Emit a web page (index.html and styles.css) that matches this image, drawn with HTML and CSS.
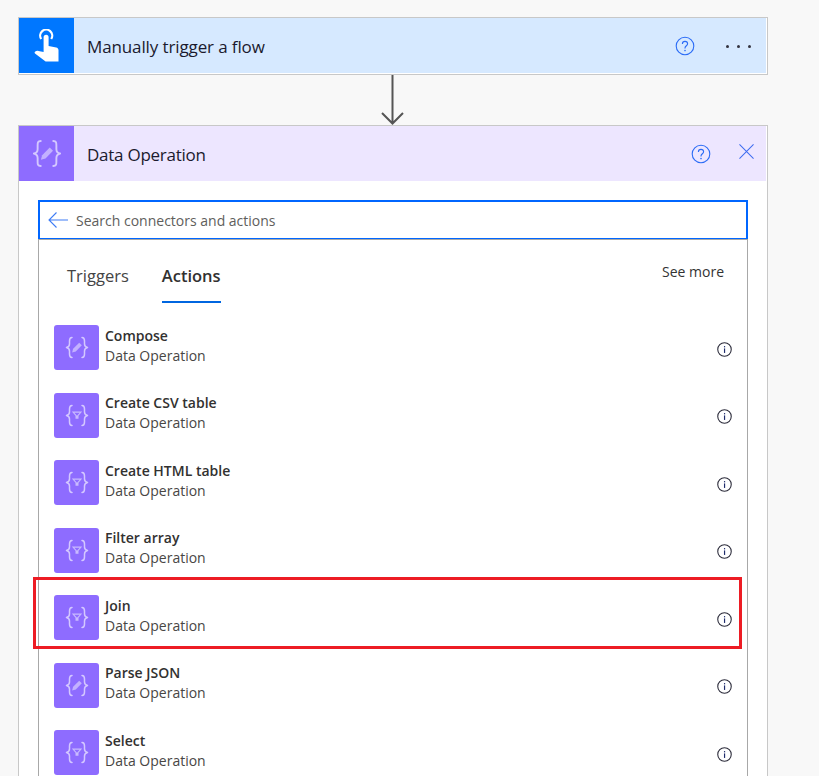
FILE: index.html
```html
<!DOCTYPE html>
<html lang="en">
<head>
<meta charset="utf-8">
<title>Flow</title>
<link rel="stylesheet" href="styles.css">
</head>
<body>
<svg class="defs" width="0" height="0" aria-hidden="true">
  <defs>
    <g id="braces" fill="none" stroke="currentColor" stroke-width="1.500" stroke-linecap="round" stroke-linejoin="round">
      <path d="M7 1.500C4.500 1.500 4.500 3 4.500 5V8C4.500 10 3.500 11 1.500 11.500C3.500 12 4.500 13 4.500 15V18C4.500 20 4.500 21.500 7 21.500"/>
      <path d="M17 1.500C19.500 1.500 19.500 3 19.500 5V8C19.500 10 20.500 11 22.500 11.500C20.500 12 19.500 13 19.500 15V18C19.500 20 19.500 21.500 17 21.500"/>
    </g>
    <symbol id="ic-pen" viewBox="0 0 24 23">
      <use href="#braces"/>
      <path d="M14.200 6.700l2.600 2.500-6 6.200-3.700 1.100 1-3.700z" fill="currentColor" opacity=".75"/>
    </symbol>
    <symbol id="ic-filter" viewBox="0 0 24 23">
      <use href="#braces"/>
      <path d="M6.800 7.500h10.400l-3.700 4.300v3h-3v-3zM9.300 8.700l2.700 3 2.700-3z" fill="currentColor" fill-rule="evenodd" opacity=".85"/>
    </symbol>
    <symbol id="ic-help" viewBox="0 0 20 20">
      <circle cx="10" cy="10" r="8.800" fill="none" stroke="currentColor" stroke-width="1.100"/>
      <path d="M7.400 7.900C7.400 6.300 8.600 5.400 10 5.400S12.600 6.300 12.600 7.800C12.600 9.600 10 9.900 10 12V12.600" fill="none" stroke="currentColor" stroke-width="1.100"/>
      <circle cx="10" cy="14.600" r=".8" fill="currentColor"/>
    </symbol>
    <symbol id="ic-info" viewBox="0 0 14 14">
      <circle cx="7" cy="7" r="6.300" fill="none" stroke="#2b2b3a" stroke-width="1"/>
      <rect x="6.500" y="6" width="1.100" height="4.200" fill="#1d2a6b"/>
      <rect x="6.500" y="3.800" width="1.100" height="1.200" fill="#1d2a6b"/>
    </symbol>
  </defs>
</svg>

<main class="canvas">
  <section class="card card-trigger">
    <header class="card-head head-trigger">
      <div class="head-icon icon-trigger">
        <svg class="hand" viewBox="0 0 26 34" width="26" height="34">
          <path d="M7.200 10A6 6 0 1 1 17.200 10" fill="none" stroke="#fff" stroke-width="2.200"/>
          <path d="M9.600 8.200a2.500 2.500 0 0 1 5 0V17l7.600 1.600c1.400.3 2.300 1.200 2.300 2.600V32.600H11.600L1 24.500c-.5-.6-.6-1.200 0-1.700.8-.8 2.200-1.100 3.400-.9l5.200 1z" fill="#fff"/>
        </svg>
      </div>
      <h2 class="head-title">Manually trigger a flow</h2>
      <svg class="help help-trigger"><use href="#ic-help"/></svg>
      <div class="dots"><span></span><span></span><span></span></div>
    </header>
  </section>

  <div class="connector">
    <svg class="connector-arrow" width="26" height="50" viewBox="0 0 26 50">
      <path d="M12.500 0V48M2 38L12.500 48.500 23 38" fill="none" stroke="#555" stroke-width="2"/>
    </svg>
  </div>

  <section class="card card-op">
    <header class="card-head head-op">
      <div class="head-icon icon-op">
        <svg class="brace-lg"><use href="#ic-pen"/></svg>
      </div>
      <h2 class="head-title">Data Operation</h2>
      <svg class="help help-op"><use href="#ic-help"/></svg>
      <svg class="close" viewBox="0 0 16 16"><path d="M.5.5l15 15M15.500.5l-15 15" fill="none" stroke="currentColor" stroke-width="1.100"/></svg>
    </header>

    <div class="card-body">
      <div class="search">
        <svg class="back" viewBox="0 0 20 16"><path d="M20 8H1M8.500.5L1 8l7.500 7.500" fill="none" stroke="currentColor" stroke-width="1.100"/></svg>
        <span class="search-text">Search connectors and actions</span>
      </div>
      <div class="panel">
        <div class="tabs">
          <span class="tab">Triggers</span>
          <span class="tab tab-active">Actions</span>
          <span class="see-more">See more</span>
        </div>
        <ul class="list">
          <li class="row"><span class="row-icon"><svg class="brace-sm"><use href="#ic-pen"/></svg></span><span class="row-text"><b>Compose</b><span>Data Operation</span></span><svg class="info"><use href="#ic-info"/></svg></li>
          <li class="row"><span class="row-icon"><svg class="brace-sm"><use href="#ic-filter"/></svg></span><span class="row-text"><b>Create CSV table</b><span>Data Operation</span></span><svg class="info"><use href="#ic-info"/></svg></li>
          <li class="row"><span class="row-icon"><svg class="brace-sm"><use href="#ic-filter"/></svg></span><span class="row-text"><b>Create HTML table</b><span>Data Operation</span></span><svg class="info"><use href="#ic-info"/></svg></li>
          <li class="row"><span class="row-icon"><svg class="brace-sm"><use href="#ic-filter"/></svg></span><span class="row-text"><b>Filter array</b><span>Data Operation</span></span><svg class="info"><use href="#ic-info"/></svg></li>
          <li class="row row-marked"><span class="row-icon"><svg class="brace-sm"><use href="#ic-filter"/></svg></span><span class="row-text"><b>Join</b><span>Data Operation</span></span><svg class="info"><use href="#ic-info"/></svg></li>
          <li class="row"><span class="row-icon"><svg class="brace-sm"><use href="#ic-pen"/></svg></span><span class="row-text"><b>Parse JSON</b><span>Data Operation</span></span><svg class="info"><use href="#ic-info"/></svg></li>
          <li class="row"><span class="row-icon"><svg class="brace-sm"><use href="#ic-filter"/></svg></span><span class="row-text"><b>Select</b><span>Data Operation</span></span><svg class="info"><use href="#ic-info"/></svg></li>
        </ul>
      </div>
    </div>
  </section>
</main>
</body>
</html>
```

FILE: styles.css
```css
*, *::after { box-sizing: border-box; }
html, body { height: 100%; }
body {
  margin: 0;
  overflow: hidden;
  background: #f8f8f8;
  color: #252423;
  font-family: "Open Sans", "Noto Sans", sans-serif;
}
.defs { position: absolute; }
.canvas {
  display: flex;
  flex-direction: column;
  width: 750px;
  height: 776px;
  overflow: hidden;
  margin-left: 18px;
  padding-top: 17px;
}
.card { flex: none; border: 1px solid #c8c8c8; }
.card-trigger { height: 58px; background: #fff; }
.card-op { background: #fff; height: 760px; }
.card-head {
  display: flex;
  align-items: center;
  height: 55px;
  margin-right: 1px;
}
.head-trigger { background: #d6e9ff; }
.head-op { background: #ede6ff; }
.head-icon {
  flex: none;
  width: 55px;
  height: 55px;
  display: flex;
  align-items: center;
  justify-content: center;
}
.icon-trigger { background: #0077ff; }
.icon-op { background: #8e6cff; }
.hand { display: block; }
.brace-lg { width: 30px; height: 29px; color: #d4c8ff; }
.head-title {
  margin: 2px 0 0 13px;
  flex: 1;
  font-size: 17px;
  font-weight: 400;
  color: #1b1a2e;
  letter-spacing: -.12px;
}
.head-op .head-title { letter-spacing: -.25px; }
.help { width: 20px; height: 20px; color: #2b6cf6; }
.help-trigger { margin-right: 31px; }
.help-op { margin-right: 28px; }
.dots { display: flex; gap: 8px; margin: 1px 15px 0 0; }
.dots span { width: 3px; height: 3px; border-radius: 50%; background: #33333f; }
.close { width: 15px; height: 15px; color: #3e6cf0; margin: 0 12px 4px 0; }

.connector {
  flex: none;
  display: flex;
  justify-content: center;
  height: 50px;
}
.connector-arrow { display: block; }

.card-body { padding: 19px 19px 0; }
.search {
  display: flex;
  align-items: center;
  height: 40px;
  border: 2px solid #0066ff;
  background: #fff;
}
.back { width: 20px; height: 16px; margin-left: 8px; color: #3e7cf5; }
.search-text { margin-left: 8px; font-size: 14px; color: #605e5c; }
.panel {
  border-left: 1px solid #a8a8a8;
  border-right: 1px solid #a8a8a8;
  border-top: 1px solid #a8a8a8;
  margin-top: -1px;
}
.tabs {
  display: flex;
  align-items: flex-start;
  height: 85px;
  padding: 25px 23px 0 28px;
}
.tab {
  font-size: 16.500px;
  color: #444;
  padding-bottom: 14px;
  margin-right: 33px;
  line-height: 22px;
}
.tab-active {
  font-weight: 600;
  color: #323130;
  border-bottom: 2px solid #0066e0;
}
.see-more { margin: -3px 0 0 auto; font-size: 14px; color: #333; line-height: 20px; }
.list { list-style: none; margin: 0; padding: 0; }
.row {
  position: relative;
  display: flex;
  align-items: center;
  height: 67.500px;
  padding: 0 15px;
}
.row-marked::after {
  content: "";
  position: absolute;
  left: -6px;
  right: 5px;
  top: -18px;
  height: 72px;
  border: 3px solid #ed1c24;
  pointer-events: none;
}
.row-icon {
  flex: none;
  width: 45px;
  height: 45px;
  border-radius: 3px;
  background: #8e6cff;
  display: flex;
  align-items: center;
  justify-content: center;
  margin-bottom: 22px;
}
.brace-sm { width: 24px; height: 23px; color: #d4c8ff; }
.row-text {
  flex: 1;
  display: flex;
  flex-direction: column;
  margin: 0 0 26px 6px;
  font-size: 14px;
  line-height: 20px;
  color: #484644;
}
.row-text b { font-weight: 600; color: #323130; }
.info { width: 15px; height: 15px; margin: 0 0 19px auto; }
```
